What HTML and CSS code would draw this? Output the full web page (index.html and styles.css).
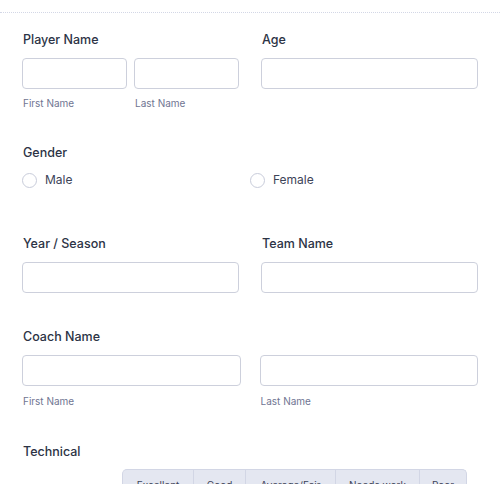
FILE: index.html
```html
<!DOCTYPE html>
<html>
<head>
<meta charset="utf-8">
<link rel="stylesheet" href="styles.css">
</head>
<body>
<div class="topline"></div>
<form class="form">
  <div class="row r1">
    <div class="field">
      <div class="label">Player Name</div>
      <div class="pair narrow">
        <div class="sub"><div class="input"></div><div class="sublabel">First Name</div></div>
        <div class="sub"><div class="input"></div><div class="sublabel">Last Name</div></div>
      </div>
    </div>
    <div class="field">
      <div class="label">Age</div>
      <div class="input"></div>
    </div>
  </div>

  <div class="gender">
    <div class="label">Gender</div>
    <div class="radios">
      <label class="radio"><span class="circle"></span>Male</label>
      <label class="radio"><span class="circle"></span>Female</label>
    </div>
  </div>

  <div class="row r3">
    <div class="field">
      <div class="label">Year / Season</div>
      <div class="input"></div>
    </div>
    <div class="field">
      <div class="label">Team Name</div>
      <div class="input"></div>
    </div>
  </div>

  <div class="coach">
    <div class="label">Coach Name</div>
    <div class="pair wide">
      <div class="sub"><div class="input"></div><div class="sublabel">First Name</div></div>
      <div class="sub"><div class="input"></div><div class="sublabel">Last Name</div></div>
    </div>
  </div>

  <div class="technical">
    <div class="label">Technical</div>
    <div class="matrix">
      <div class="head">
        <div class="hc c1">Excellent</div>
        <div class="hc c2">Good</div>
        <div class="hc c3">Average/Fair</div>
        <div class="hc c4">Needs work</div>
        <div class="hc c5">Poor</div>
      </div>
    </div>
  </div>
</form>
</body>
</html>
```
FILE: styles.css
```css
html, body {
  margin: 0;
  padding: 0;
  background: #ffffff;
  width: 500px;
  height: 484px;
  overflow: hidden;
  font-family: Inter, "Noto Sans", sans-serif;
  color: #2c3345;
}
.topline {
  margin-top: 12px;
  border-top: 1px dotted #d3d7e6;
}
.form {
  padding: 0 22px;
}
.label {
  font-size: 12.5px;
  line-height: 16px;
  font-weight: 500;
  color: #2c3345;
  padding-left: 1px;
}
.row {
  display: grid;
  grid-template-columns: 217px 217px;
  column-gap: 22px;
}
.r1 { margin-top: 19px; }
.field .label { margin-bottom: 10px; }
.input {
  height: 31px;
  box-sizing: border-box;
  border: 1px solid #cdd0dc;
  border-radius: 4px;
  background: #fff;
}
.pair {
  display: grid;
  grid-template-columns: 1fr 1fr;
}
.pair.narrow { column-gap: 7px; }
.pair.wide { column-gap: 19px; }
.sublabel {
  font-size: 10px;
  line-height: 12px;
  margin-top: 8px;
  color: #6f7592;
  padding-left: 1px;
}
.gender { margin-top: 36px; }
.radios {
  display: grid;
  grid-template-columns: 228px 1fr;
  margin-top: 11px;
}
.radio {
  display: flex;
  align-items: center;
  font-size: 12px;
  line-height: 16px;
  color: #3d4458;
}
.circle {
  width: 15px;
  height: 15px;
  box-sizing: border-box;
  border: 1px solid #c8ccda;
  border-radius: 50%;
  margin-right: 8px;
  background: #fff;
}
.r3 { margin-top: 48px; }
.coach { margin-top: 36px; }
.coach .label { margin-bottom: 10px; }
.coach .sublabel { margin-top: 9px; }
.technical { margin-top: 37px; }
.matrix {
  margin-top: 9px;
  padding-left: 100px;
}
.head {
  display: flex;
  width: 345px;
  height: 30px;
  box-sizing: border-box;
  background: #e4e7f1;
  border: 1px solid #d2d6e5;
  border-bottom: none;
  border-radius: 5px 5px 0 0;
}
.hc {
  font-size: 10px;
  line-height: 12px;
  color: #3d4458;
  text-align: center;
  padding-top: 9px;
  border-right: 1px solid #d2d6e5;
  box-sizing: border-box;
}
.c1 { width: 71px; }
.c2 { width: 52px; }
.c3 { width: 90px; }
.c4 { width: 84px; }
.c5 { width: 46px; border-right: none; }
```
